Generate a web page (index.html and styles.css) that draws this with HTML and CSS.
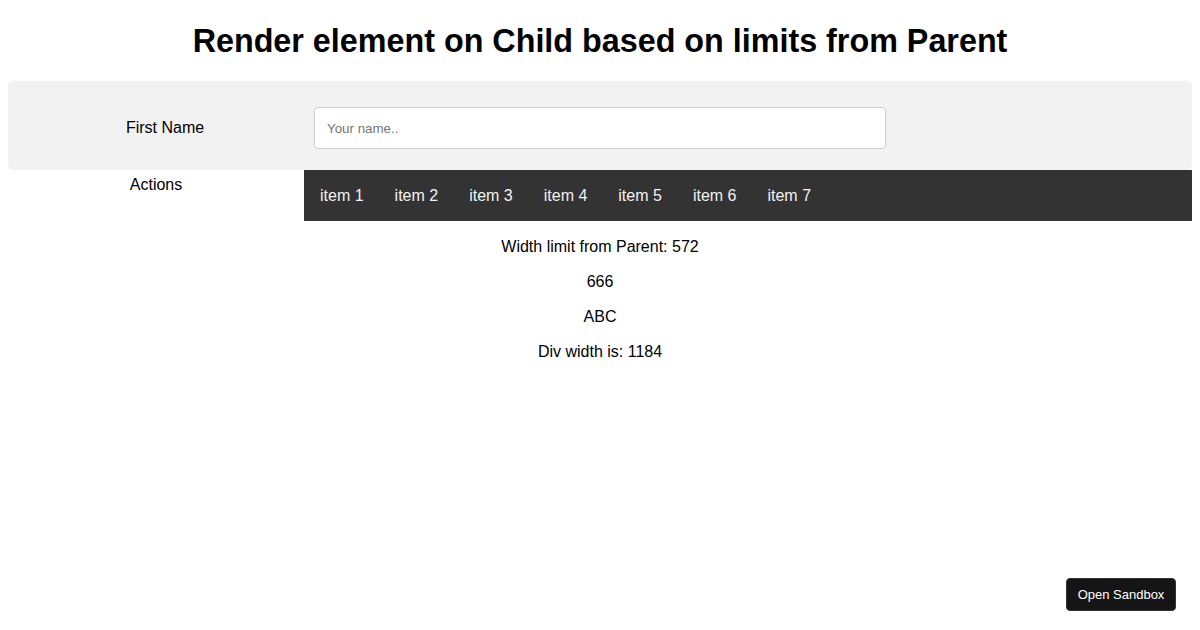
FILE: index.html
```html
<!DOCTYPE html>
<html>
<head>
<meta charset="utf-8">
<link rel="stylesheet" href="styles.css">
</head>
<body>
<h1 class="title">Render element on Child based on limits from Parent</h1>
<div class="form-box">
  <div class="row">
    <div class="col-25 center"><label class="label">First Name</label></div>
    <div class="col-75"><input class="name-input" type="text" placeholder="Your name.."></div>
  </div>
</div>
<div class="row">
  <div class="col-25 center"><span class="actions">Actions</span></div>
  <div class="col-75">
    <nav class="nav">
      <a class="nav-item">item 1</a>
      <a class="nav-item">item 2</a>
      <a class="nav-item">item 3</a>
      <a class="nav-item">item 4</a>
      <a class="nav-item">item 5</a>
      <a class="nav-item">item 6</a>
      <a class="nav-item">item 7</a>
    </nav>
  </div>
</div>
<div class="info">
  <p class="line">Width limit from Parent: 572</p>
  <p class="line">666</p>
  <p class="line">ABC</p>
  <p class="line">Div width is: 1184</p>
</div>
<button class="sandbox">Open Sandbox</button>
</body>
</html>
```
FILE: styles.css
```css
body {
  margin: 8px;
  font-family: "Liberation Sans", Arial, sans-serif;
  font-size: 16px;
  color: #000;
  background: #fff;
}
.title {
  font-size: 32.3px;
  font-weight: bold;
  text-align: center;
  margin: 15px 0 21.44px;
  line-height: 37px;
}
.form-box {
  background: #f2f2f2;
  border-radius: 5px;
  padding: 20px 20px 21px;
}
.row {
  display: flex;
}
.col-25 {
  width: 25%;
  flex: none;
  margin-top: 6px;
}
.col-75 {
  flex: 1;
}
.form-box .col-75 {
  margin-top: 6px;
}
.center {
  text-align: center;
}
.label {
  display: inline-block;
  padding: 12px 12px 12px 0;
  line-height: 18px;
}
.actions {
  line-height: 18px;
}
.name-input {
  display: block;
  width: 66.6667%;
  height: 42px;
  box-sizing: border-box;
  padding: 12px;
  border: 1px solid #ccc;
  border-radius: 4px;
  font-family: "Liberation Sans", Arial, sans-serif;
  font-size: 13.33px;
  background: #fff;
  margin: 0;
}
.name-input::placeholder {
  color: #757575;
}
.nav {
  display: flex;
  background: #333;
}
.nav-item {
  color: #f2f2f2;
  padding: 16px 15px 16px 16px;
  font-size: 16px;
  line-height: 19px;
}
.info {
  text-align: center;
}
.line {
  margin: 16px 0;
  line-height: 19px;
}
.sandbox {
  position: fixed;
  right: 24px;
  bottom: 19px;
  width: 110px;
  height: 33px;
  background: #151515;
  color: #fff;
  border: 1px solid #333;
  border-radius: 4px;
  font-family: "Liberation Sans", Arial, sans-serif;
  font-size: 13px;
  padding: 0;
}
```
